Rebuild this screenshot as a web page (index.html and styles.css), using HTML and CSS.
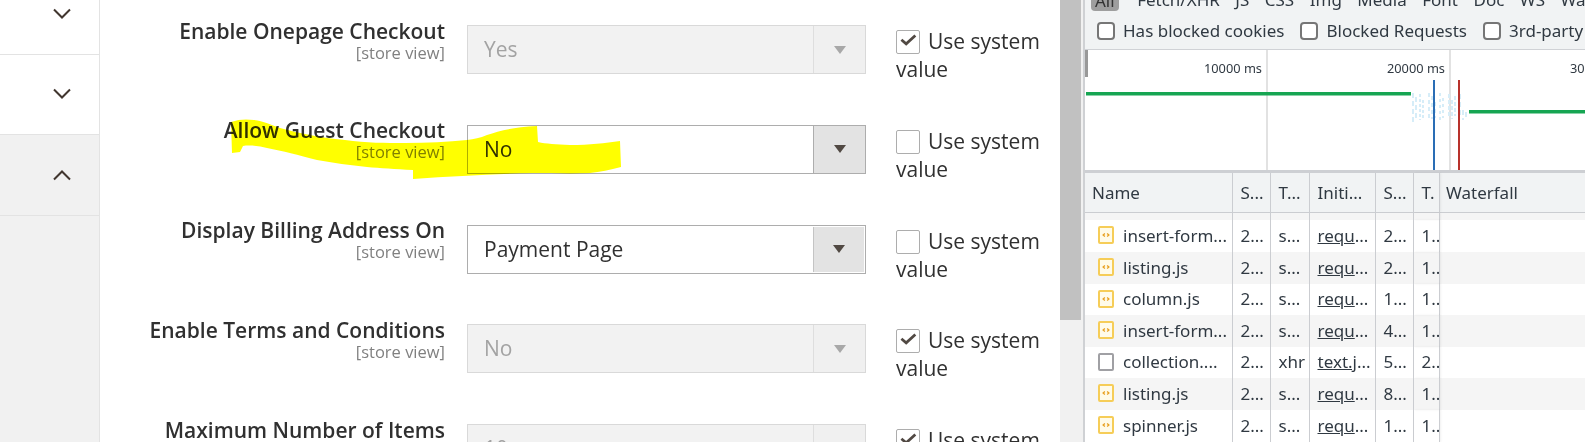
FILE: index.html
```html
<!DOCTYPE html>
<html lang="en">
<head>
<meta charset="utf-8">
<title>Checkout configuration</title>
<link rel="stylesheet" href="styles.css">
</head>
<body>
<svg class="defs" width="0" height="0" aria-hidden="true">
  <symbol id="tick" viewBox="0 0 24 24"><path d="M4.8 9.6 10 14 20 5" fill="none" stroke="#514943" stroke-width="3"/></symbol>
  <symbol id="script" viewBox="0 0 16 18"><rect x="1" y="1" width="14" height="16" rx="1" fill="#fffbe9" stroke="#f6cd58" stroke-width="2"/><path d="M6.9 7.4 5.1 9l1.8 1.6M9.1 7.4 10.9 9l-1.8 1.6" fill="none" stroke="#e8a020" stroke-width="1.3"/></symbol>
  <symbol id="blank" viewBox="0 0 16 18"><rect x="1" y="1" width="14" height="16" rx="1" fill="#fff" stroke="#a0a0a4" stroke-width="2"/></symbol>
  <symbol id="down" viewBox="0 0 18 12"><path d="M1 1.5 9 9.5 17 1.5" fill="none" stroke="#41362f" stroke-width="2"/></symbol>
  <symbol id="up" viewBox="0 0 18 12"><path d="M1 10.5 9 2.5 17 10.5" fill="none" stroke="#41362f" stroke-width="2"/></symbol>
</svg>

<div class="page">
  <nav class="sidebar">
    <div class="side-item first"><svg class="chev"><use href="#down"/></svg></div>
    <div class="side-item"><svg class="chev"><use href="#down"/></svg></div>
    <div class="side-item active"><svg class="chev"><use href="#up"/></svg></div>
  </nav>

  <main class="main">
    <div class="row">
      <div class="label"><div class="name">Enable Onepage Checkout</div><div class="scope">[store view]</div></div>
      <div class="select disabled"><span class="value">Yes</span><span class="btn"><i class="arrow"></i></span></div>
      <div class="system"><span class="check"><svg><use href="#tick"/></svg></span>Use system value</div>
    </div>
    <div class="row">
      <div class="label"><div class="name">Allow Guest Checkout</div><div class="scope">[store view]</div></div>
      <div class="select"><span class="value">No</span><span class="btn"><i class="arrow"></i></span></div>
      <div class="system"><span class="check"></span>Use system value</div>
    </div>
    <div class="row">
      <div class="label"><div class="name">Display Billing Address On</div><div class="scope">[store view]</div></div>
      <div class="select inset"><span class="value">Payment Page</span><span class="btn"><i class="arrow"></i></span></div>
      <div class="system"><span class="check"></span>Use system value</div>
    </div>
    <div class="row">
      <div class="label"><div class="name">Enable Terms and Conditions</div><div class="scope">[store view]</div></div>
      <div class="select disabled"><span class="value">No</span><span class="btn"><i class="arrow"></i></span></div>
      <div class="system"><span class="check"><svg><use href="#tick"/></svg></span>Use system value</div>
    </div>
    <div class="row">
      <div class="label"><div class="name">Maximum Number of Items</div></div>
      <div class="select disabled"><span class="value">10</span><span class="btn"><i class="arrow"></i></span></div>
      <div class="system"><span class="check"><svg><use href="#tick"/></svg></span>Use system value</div>
    </div>
  </main>

  <div class="scrollbar"><div class="thumb"></div></div>

  <section class="devtools">
    <div class="types">
      <span class="pill">All</span><span>Fetch/XHR</span><span>JS</span><span>CSS</span><span>Img</span><span>Media</span><span>Font</span><span>Doc</span><span>WS</span><span>Wasm</span>
    </div>
    <div class="filters">
      <span class="dt-check"></span><span>Has blocked cookies</span>
      <span class="dt-check"></span><span>Blocked Requests</span>
      <span class="dt-check"></span><span>3rd-party requests</span>
    </div>
    <div class="overview">
      <i class="handle"></i>
      <div class="tick-cell">10000 ms</div>
      <div class="tick-cell">20000 ms</div>
      <div class="tick-cell">30000 ms</div>
      <svg class="chart" width="500" height="120" viewBox="0 0 500 120">
        <rect x="1" y="42" width="325" height="3.5" fill="#16a552"/>
        <rect x="384" y="60" width="116" height="3.5" fill="#16a552"/>
        <g fill="none" stroke="#d6edf8" stroke-width="2">
          <path stroke-dasharray="5 3" d="M328 43V73M331 47V70"/>
          <path stroke-dasharray="3 2" d="M335 44V70M338 50V68"/>
          <path stroke-dasharray="4 3" d="M344 43V70M347 46V69M350 52V68"/>
          <path stroke-dasharray="3 3" d="M355 43V70M358 48V68"/>
          <path stroke-dasharray="4 2" d="M364 44V68M367 50V69M370 46V66"/>
          <path stroke-dasharray="5 3" d="M375 44V66M378 60V70M381 62V68"/>
        </g>
        <rect x="348" y="30" width="2" height="90" fill="#2a6db5"/>
        <rect x="373" y="30" width="2" height="90" fill="#b8322c"/>
      </svg>
    </div>
    <div class="net">
      <div class="tr head"><span>Name</span><span>S...</span><span>T...</span><span>Initi...</span><span>S...</span><span>T.</span><span>Waterfall</span></div>
      <div class="rows">
        <div class="tr stripe stub"><span></span><span></span><span></span><span></span><span></span><span></span><span></span></div>
        <div class="tr"><span class="file"><svg class="ico"><use href="#script"/></svg>insert-form...</span><span>2...</span><span>s...</span><span><u>requ</u>...</span><span>2...</span><span>1..</span><span></span></div>
        <div class="tr stripe"><span class="file"><svg class="ico"><use href="#script"/></svg>listing.js</span><span>2...</span><span>s...</span><span><u>requ</u>...</span><span>2...</span><span>1..</span><span></span></div>
        <div class="tr"><span class="file"><svg class="ico"><use href="#script"/></svg>column.js</span><span>2...</span><span>s...</span><span><u>requ</u>...</span><span>1...</span><span>1..</span><span></span></div>
        <div class="tr stripe"><span class="file"><svg class="ico"><use href="#script"/></svg>insert-form...</span><span>2...</span><span>s...</span><span><u>requ</u>...</span><span>4...</span><span>1..</span><span></span></div>
        <div class="tr"><span class="file"><svg class="ico"><use href="#blank"/></svg>collection....</span><span>2...</span><span>xhr</span><span><u>text.j</u>...</span><span>5...</span><span>2..</span><span></span></div>
        <div class="tr stripe"><span class="file"><svg class="ico"><use href="#script"/></svg>listing.js</span><span>2...</span><span>s...</span><span><u>requ</u>...</span><span>8...</span><span>1..</span><span></span></div>
        <div class="tr"><span class="file"><svg class="ico"><use href="#script"/></svg>spinner.js</span><span>2...</span><span>s...</span><span><u>requ</u>...</span><span>1...</span><span>1..</span><span></span></div>
      </div>
    </div>
  </section>

  <svg class="highlight" width="640" height="190" viewBox="0 0 640 190" aria-hidden="true">
    <path fill="#ffff00" d="M231 122 C239 119 247 119 254 120 C263 121 272 125 280 128 C302 134 323 138 345 140 C367 143 385 143 405 143 C427 143 448 142 467 140 C474 139 480 138 487 135 C499 131 513 127 537 126 L538 142 C546 144 556 144 570 145 C590 145 605 143 620 141 L621 167 C610 170 600 172 590 173 C570 174 550 173 533 173 C495 174 455 176 413 179 L413 170 C395 169 380 168 367 167 C350 165 333 163 317 160 C298 155 283 151 267 148 C258 146 250 145 243 146 L240 152 L232 153 Z"/>
  </svg>
</div>
</body>
</html>
```

FILE: styles.css
```css
* { box-sizing: border-box; }
html, body { margin: 0; height: 100%; overflow: hidden; background: #fff; }
.defs { position: absolute; }
.page { position: relative; display: flex; width: 1585px; height: 442px; overflow: hidden; font-family: "Open Sans", "Noto Sans", sans-serif; color: #303030; }

/* Admin side tabs */
.sidebar { flex: 0 0 100px; background: #f1f1f1; border-right: 1px solid #e3e3e3; }
.side-item { display: flex; justify-content: flex-end; align-items: center; height: 80.5px; padding-right: 28px; background: #fff; border-bottom: 1px solid #e3e3e3; }
.side-item.first { height: 54.5px; padding-bottom: 26px; }
.side-item.active { background: #f1f1f1; }
.chev { width: 18px; height: 12px; }

/* Config form */
.main { flex: 0 0 960px; padding-top: 18px; overflow: hidden; }
.row { display: grid; grid-template-columns: 345px 399px 150px; column-gap: 22px; height: 99.75px; }
.row > .system { margin-left: 8px; }
.label { padding-top: .5px; text-align: right; }
.name { font-size: 21px; font-weight: 600; line-height: 24px; color: #303030; }
.scope { font-size: 16.5px; line-height: 20px; color: #808080; }
.select { display: flex; height: 49px; margin-top: 7px; background: #fff; border: 1px solid #adadad; font-size: 21px; }
.value { flex: 1; padding-left: 16px; line-height: 46px; }
.btn { display: flex; flex: 0 0 52px; align-items: center; justify-content: center; background: #e3e3e3; border-left: 1px solid #adadad; }
.arrow { width: 0; height: 0; border-left: 6px solid transparent; border-right: 6px solid transparent; border-top: 8px solid #514943; }
.select.inset .btn { margin: 1px 1px 1px 0; flex-basis: 51px; border-left-color: #c4c4c4; }
.select.disabled { background: #f2f2f2; border-color: #d9d9d9; }
.select.disabled .value { color: #a3a3a3; }
.select.disabled .btn { background: #f0f0f0; border-left-color: #dedede; }
.select.disabled .arrow { border-top-color: #a8a8a8; }
.system { width: 150px; margin-top: 9px; font-size: 21px; line-height: 28px; color: #303030; }
.check { display: inline-block; width: 24px; height: 24px; margin: 3px 8px 0 0; vertical-align: top; background: #fff; border: 1px solid #adadad; border-radius: 2px; }
.check svg { display: block; width: 22px; height: 22px; }

/* Page scrollbar */
.scrollbar { flex: 0 0 23px; padding-right: 2px; background: #f1f1f1; }
.thumb { height: 320px; background: #c1c1c1; }

/* DevTools network panel */
.devtools { flex: 0 0 502px; display: flex; flex-direction: column; background: #f1f3f4; border-left: 2px solid #cfd1d4; font-family: "Noto Sans", "Open Sans", sans-serif; font-size: 17px; color: #303942; }
.types { display: flex; flex: 0 0 20px; align-items: flex-end; gap: 15.5px; height: 20px; margin-left: 6px; white-space: nowrap; overflow: hidden; }
.types > span { line-height: 20px; transform: translateY(-10px); }
.types > .pill { padding: 0 4px; height: 21px; line-height: 21px; background: #9e9e9e; border-radius: 4px; color: #333; transform: translateY(-9px); margin-right: 3px; }
.filters { display: flex; flex: 0 0 29px; align-items: center; padding: 0 0 8px 12px; white-space: nowrap; overflow: hidden; }
.filters > span + .dt-check { margin-left: 16px; }
.dt-check { flex: 0 0 18px; height: 18px; margin-right: 8px; background: #fff; border: 2px solid #767676; border-radius: 4px; }
.overview { position: relative; display: flex; flex: 0 0 121px; background: #fff; border-top: 1px solid #d0d2d6; overflow: hidden; }
.handle { position: absolute; left: 0; top: 0; width: 3px; height: 27px; background: #999; }
.tick-cell { flex: 0 0 183px; height: 120px; padding: 8px 4px 0 0; text-align: right; font-size: 12.8px; line-height: 20px; color: #303942; border-right: 2px solid #e2e2e2; white-space: nowrap; }
.chart { position: absolute; left: 0; top: 0; }
.net { display: flex; flex: 1; min-height: 0; flex-direction: column; border-top: 3px solid #cdcfd3; }
.tr { display: grid; grid-template-columns: 148px 38px 39px 66px 38px 26px 1fr; height: 31.6px; align-items: stretch; background: #fff; }
.tr > span { display: flex; align-items: center; padding: 0 0 1.5px 7.5px; border-right: 1px solid #cbcdd1; white-space: pre; overflow: hidden; }
.tr > span:first-child { padding-left: 7px; }
.tr > span:last-child { padding-left: 6px; border-right: 0; }
.tr > span:nth-child(6) { box-shadow: 1px 0 2px rgba(0, 0, 0, .06); }
.tr.stripe { background: #f5f5f5; }
.tr u { text-decoration: underline; }
.tr.head { flex: 0 0 40px; height: 40px; background: #f1f3f4; border-bottom: 1px solid #cbcdd1; }
.tr.head > span { padding-bottom: 0; }
.tr.stub { height: 7.4px; }
.rows { flex: 1; min-height: 0; overflow: hidden; }
.tr > span.file { padding-left: 13px; }
.ico { flex: 0 0 16px; width: 16px; height: 18px; margin-right: 9px; }

/* Hand-drawn marker stroke over the form */
.highlight { position: absolute; left: 0; top: 0; mix-blend-mode: multiply; pointer-events: none; }
```
